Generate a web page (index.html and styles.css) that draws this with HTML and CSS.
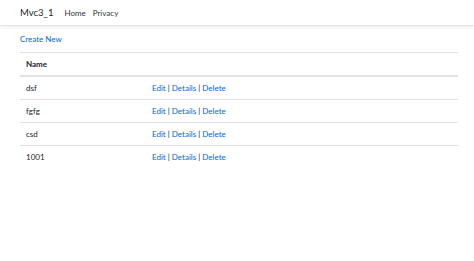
FILE: index.html
```html
<!DOCTYPE html>
<html lang="en">
<head>
  <meta charset="UTF-8" />
  <title>Index - Mvc3_1</title>
  <link rel="stylesheet" href="styles.css">
</head>
<body>
  <header class="navbar">
    <a class="brand" href="#">Mvc3_1</a>
    <a class="nav-link" href="#">Home</a>
    <a class="nav-link" href="#">Privacy</a>
  </header>

  <main class="container">
    <p class="create"><a href="#">Create New</a></p>

    <table class="table">
      <thead>
        <tr>
          <th class="col-name">Name</th>
          <th></th>
        </tr>
      </thead>
      <tbody>
        <tr>
          <td>dsf</td>
          <td><a href="#">Edit</a> | <a href="#">Details</a> | <a href="#">Delete</a></td>
        </tr>
        <tr>
          <td>fgfg</td>
          <td><a href="#">Edit</a> | <a href="#">Details</a> | <a href="#">Delete</a></td>
        </tr>
        <tr>
          <td>csd</td>
          <td><a href="#">Edit</a> | <a href="#">Details</a> | <a href="#">Delete</a></td>
        </tr>
        <tr>
          <td>1001</td>
          <td><a href="#">Edit</a> | <a href="#">Details</a> | <a href="#">Delete</a></td>
        </tr>
      </tbody>
    </table>
  </main>
</body>
</html>
```

FILE: styles.css
```css
body {
  font-family: Lato, "Open Sans", sans-serif;
  font-size: 8px;
  line-height: 10px;
  color: #212529;
  margin: 0;
  background: #fff;
}
a {
  color: #0366d6;
  text-decoration: none;
}
.navbar {
  height: 25px;
  display: flex;
  align-items: center;
  padding: 0 20px;
  border-bottom: 1px solid #e5e5e5;
  box-shadow: 0 2px 4px rgba(0, 0, 0, 0.06);
}
.brand {
  color: #212529;
  font-size: 9.5px;
  margin-right: 11px;
}
.nav-link {
  color: #333;
  margin-right: 7px;
}
.container {
  padding: 0 16px 0 20px;
}
.create {
  margin: 8px 0 8px;
}
.table {
  width: 100%;
  border-collapse: collapse;
}
.table th,
.table td {
  text-align: left;
  padding: 6px 6px;
  border-top: 1px solid #dee2e6;
}
.table thead th {
  border-bottom: 2px solid #dee2e6;
  font-weight: bold;
}
.col-name {
  width: 114px;
}
```
